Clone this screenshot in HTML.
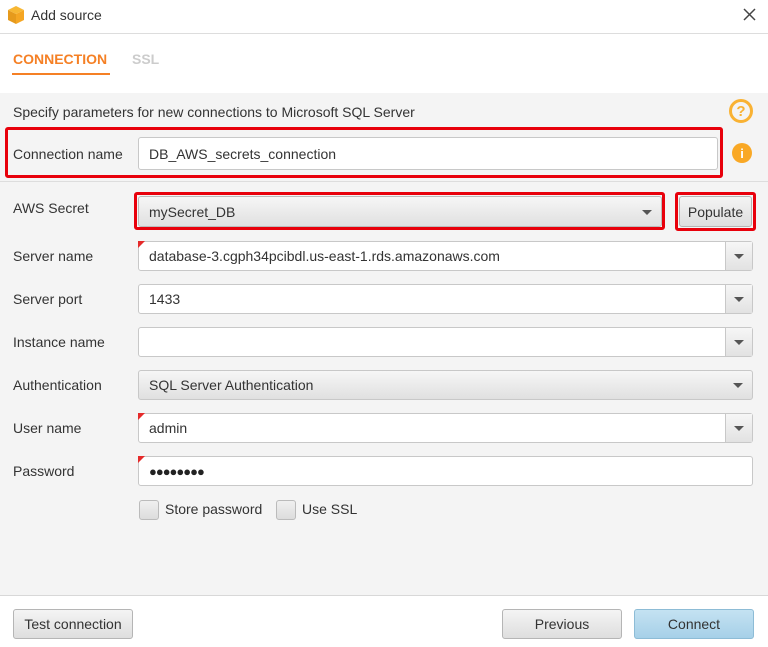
<!DOCTYPE html>
<html><head><style>
*{box-sizing:border-box;margin:0;padding:0}
body{width:768px;height:647px;background:#fff;font-family:"Liberation Sans",sans-serif;font-size:14px;color:#333;position:relative;overflow:hidden}
.a{position:absolute}
.lbl{position:absolute;left:13px;font-size:14px;color:#333}
.inp{position:absolute;left:138px;background:#fff;border:1px solid #c8c8c8;border-radius:3px;padding-left:10px;display:flex;align-items:center;font-size:14px;color:#333}
.arr{position:absolute;right:0;top:0;bottom:0;width:27px;border-left:1px solid #c8c8c8;background:linear-gradient(#f6f6f6,#e2e2e2)}
.arr:after,.tri:after{content:"";position:absolute;left:50%;top:50%;margin:-2px 0 0 -5px;border-left:5px solid transparent;border-right:5px solid transparent;border-top:5px solid #555}
.req:before{content:"";position:absolute;left:-1px;top:-1px;border-top:7px solid #e52a2a;border-right:7px solid transparent}
.btn{position:absolute;border:1px solid #b5b5b5;border-radius:3px;background:linear-gradient(#f4f4f4,#dedede);display:flex;align-items:center;justify-content:center;font-size:14px;color:#333}
.red{position:absolute;border:3px solid #e8000b;border-radius:3px}
.cb{position:absolute;width:20px;height:20px;border:1px solid #bbb;border-radius:3px;background:linear-gradient(#f0f0f0,#dcdcdc)}
</style></head><body>
<svg class="a" style="left:6px;top:5px" width="20" height="20" viewBox="0 0 20 20"><path d="M2 5 L10 1 L18 5 L10 9Z" fill="#f7b733"/><path d="M2 5 L10 9 L10 19 L2 15Z" fill="#e69a1c"/><path d="M18 5 L10 9 L10 19 L18 15Z" fill="#f5a623"/></svg>
<div class="a" style="left:31px;top:7px;font-size:14px;color:#333">Add source</div>
<svg class="a" style="left:743px;top:8px" width="13" height="13" viewBox="0 0 13 13"><path d="M1 1L12 12M12 1L1 12" stroke="#444" stroke-width="1.5"/></svg>
<div class="a" style="left:0;top:33px;width:768px;height:1px;background:#ddd"></div>
<div class="a" style="left:13px;top:51px;font-size:14px;font-weight:bold;color:#f58025">CONNECTION</div>
<div class="a" style="left:12px;top:73px;width:98px;height:2px;background:#f58025"></div>
<div class="a" style="left:132px;top:51px;font-size:14px;font-weight:bold;color:#ccc">SSL</div>
<div class="a" style="left:0;top:93px;width:768px;height:502px;background:#f4f4f4"></div>
<div class="a" style="left:0;top:595px;width:768px;height:1px;background:#d8d8d8"></div>
<div class="a" style="left:13px;top:104px;font-size:14px">Specify parameters for new connections to Microsoft SQL Server</div>
<div class="a" style="left:729px;top:99px;width:24px;height:24px;border-radius:50%;border:3px solid #f9b233;color:#f9b233;font-weight:bold;font-size:15px;display:flex;align-items:center;justify-content:center">?</div>
<div class="a" style="left:732px;top:143px;width:20px;height:20px;border-radius:50%;background:#f9a825;color:#fff;font-weight:bold;font-size:13px;display:flex;align-items:center;justify-content:center">i</div>
<div class="red" style="left:5px;top:127px;width:718px;height:51px"></div>
<div class="lbl" style="top:146px">Connection name</div>
<div class="inp" style="top:137px;width:580px;height:33px">DB_AWS_secrets_connection</div>
<div class="a" style="left:0;top:181px;width:768px;height:1px;background:#ddd"></div>
<div class="lbl" style="top:200px">AWS Secret</div>
<div class="red" style="left:134px;top:192px;width:531px;height:38px"></div>
<div class="inp" style="top:196px;width:524px;height:31px;background:linear-gradient(#f6f6f6,#e0e0e0);border-color:#bbb">mySecret_DB<span class="tri" style="position:absolute;right:8px;top:0;bottom:0;width:12px"></span></div>
<div class="red" style="left:675px;top:192px;width:81px;height:39px"></div>
<div class="btn" style="left:679px;top:196px;width:73px;height:31px">Populate</div>
<div class="lbl" style="top:248px">Server name</div>
<div class="inp req" style="top:241px;width:615px;height:30px">database-3.cgph34pcibdl.us-east-1.rds.amazonaws.com<div class="arr"></div></div>
<div class="lbl" style="top:291px">Server port</div>
<div class="inp" style="top:284px;width:615px;height:30px">1433<div class="arr"></div></div>
<div class="lbl" style="top:334px">Instance name</div>
<div class="inp" style="top:327px;width:615px;height:30px"><div class="arr"></div></div>
<div class="lbl" style="top:377px">Authentication</div>
<div class="inp" style="top:370px;width:615px;height:30px;background:linear-gradient(#f6f6f6,#e0e0e0)">SQL Server Authentication<span class="tri" style="position:absolute;right:7px;top:0;bottom:0;width:14px"></span></div>
<div class="lbl" style="top:420px">User name</div>
<div class="inp req" style="top:413px;width:615px;height:30px">admin<div class="arr"></div></div>
<div class="lbl" style="top:463px">Password</div>
<div class="inp req" style="top:456px;width:615px;height:30px;font-size:13px;letter-spacing:-1px;color:#222">●●●●●●●●</div>
<div class="cb" style="left:139px;top:500px"></div>
<div class="a" style="left:165px;top:501px">Store password</div>
<div class="cb" style="left:276px;top:500px"></div>
<div class="a" style="left:302px;top:501px">Use SSL</div>
<div class="btn" style="left:13px;top:609px;width:120px;height:30px">Test connection</div>
<div class="btn" style="left:502px;top:609px;width:120px;height:30px">Previous</div>
<div class="btn" style="left:634px;top:609px;width:120px;height:30px;background:linear-gradient(#c4e2f2,#a6d0e8);border-color:#8dbcd6">Connect</div>
</body></html>
